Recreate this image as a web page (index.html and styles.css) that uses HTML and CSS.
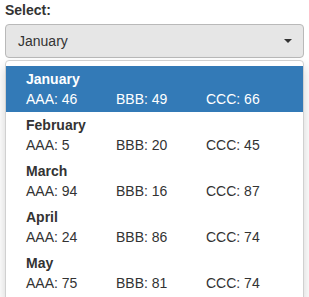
FILE: index.html
```html
<!DOCTYPE html>
<html lang="en">
<head>
  <meta charset="UTF-8">
  <title>Select</title>
  <link rel="stylesheet" href="styles.css">
</head>
<body>
  <div class="form-group">
    <label class="control-label">Select:</label>
    <div class="selectize">
      <div class="selectize-input">
        <span class="item">January</span>
        <span class="caret"></span>
      </div>
      <div class="selectize-dropdown">
        <div class="option active">
          <div class="name">January</div>
          <div class="vals"><span>AAA: 46</span><span>BBB: 49</span><span>CCC: 66</span></div>
        </div>
        <div class="option">
          <div class="name">February</div>
          <div class="vals"><span>AAA: 5</span><span>BBB: 20</span><span>CCC: 45</span></div>
        </div>
        <div class="option">
          <div class="name">March</div>
          <div class="vals"><span>AAA: 94</span><span>BBB: 16</span><span>CCC: 87</span></div>
        </div>
        <div class="option">
          <div class="name">April</div>
          <div class="vals"><span>AAA: 24</span><span>BBB: 86</span><span>CCC: 74</span></div>
        </div>
        <div class="option">
          <div class="name">May</div>
          <div class="vals"><span>AAA: 75</span><span>BBB: 81</span><span>CCC: 74</span></div>
        </div>
      </div>
    </div>
  </div>
</body>
</html>
```

FILE: styles.css
```css
body { margin: 0; padding: 0 5px; background: #fff; color: #333; font-family: "Liberation Sans", Arial, sans-serif; font-size: 14px; line-height: 20px; overflow: hidden; height: 297px; }
.control-label { display: block; font-weight: bold; margin-bottom: 4px; }
.selectize-input { display: flex; align-items: center; justify-content: space-between; height: 34px; box-sizing: border-box; padding: 0 12px 0 12px; background: #e6e6e6; border: 1px solid #b9b9b9; border-radius: 4px; }
.caret { width: 0; height: 0; border-left: 4px solid transparent; border-right: 4px solid transparent; border-top: 4px solid #333; margin-right: -1px; }
.selectize-dropdown { margin-top: 2px; background: #fff; border: 1px solid #d0d0d0; border-radius: 4px; padding: 5px 0; box-shadow: 0 6px 12px rgba(0,0,0,.175); }
.option { padding: 3px 20px; }
.option.active { background: #337ab7; color: #fff; }
.name { font-weight: bold; }
.vals { display: flex; }
.vals span { flex: 0 0 90px; white-space: nowrap; }
```
